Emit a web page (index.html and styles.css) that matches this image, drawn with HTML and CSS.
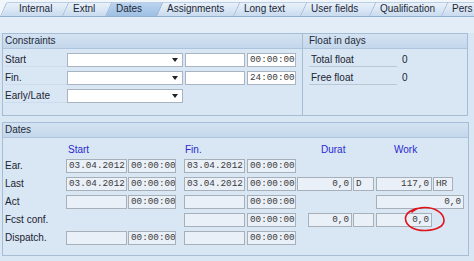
FILE: index.html
```html
<!DOCTYPE html>
<html lang="en">
<head>
  <meta charset="UTF-8">
  <meta name="viewport" content="width=device-width, initial-scale=1.0">
  <title>Activity dates</title>
  <link rel="stylesheet" href="styles.css">
</head>
<body>
  <div class="tabs">
    <div class="tab tab-first">Internal</div>
    <div class="tab" style="width:43px">Extnl</div>
    <div class="tab active" style="width:51px">Dates</div>
    <div class="tab" style="width:77px">Assignments</div>
    <div class="tab" style="width:67px">Long text</div>
    <div class="tab" style="width:69px">User fields</div>
    <div class="tab" style="width:72px">Qualification</div>
    <div class="tab" style="width:40px">Pers</div>
  </div>
  <div class="toolbar"></div>

  <div class="top-row">
    <section class="constraints">
      <div class="group-head">Constraints</div>
      <div class="c-grid">
        <div class="lbl">Start</div>
        <div class="field edit select"><span class="arrow"></span></div>
        <div class="field edit"></div>
        <div class="field edit mono">00:00:00</div>

        <div class="lbl">Fin.</div>
        <div class="field edit select"><span class="arrow"></span></div>
        <div class="field edit"></div>
        <div class="field edit mono">24:00:00</div>

        <div class="lbl">Early/Late</div>
        <div class="field edit select"><span class="arrow"></span></div>
      </div>
    </section>
    <section class="float">
      <div class="group-head float-head">Float in days</div>
      <div class="f-grid">
        <div class="lbl f-lbl">Total float</div>
        <div class="f-val">0</div>
        <div class="lbl f-lbl">Free float</div>
        <div class="f-val">0</div>
      </div>
    </section>
  </div>

  <section class="dates">
    <div class="group-head">Dates</div>
    <div class="d-grid">
      <div></div>
      <div class="col-head h-start">Start</div>
      <div></div>
      <div class="col-head h-fin">Fin.</div>
      <div></div>
      <div class="col-head h-durat">Durat</div>
      <div></div>
      <div class="col-head h-work">Work</div>
      <div></div>

      <div class="lbl">Ear.</div>
      <div class="field ro mono w-date">03.04.2012</div>
      <div class="field ro mono w-t1">00:00:00</div>
      <div class="field ro mono w-date">03.04.2012</div>
      <div class="field ro mono w-t2">00:00:00</div>

      <div class="lbl row-start">Last</div>
      <div class="field ro mono w-date">03.04.2012</div>
      <div class="field ro mono w-t1">00:00:00</div>
      <div class="field ro mono w-date">03.04.2012</div>
      <div class="field ro mono w-t2">00:00:00</div>
      <div class="field ro mono num w-dur">0,0</div>
      <div class="field ro mono w-unit">D</div>
      <div class="field ro mono num w-work">117,0</div>
      <div class="field ro mono w-wunit">HR</div>

      <div class="lbl row-start">Act</div>
      <div class="field ro mono w-date"></div>
      <div class="field ro mono w-t1">00:00:00</div>
      <div class="field ro mono w-date"></div>
      <div class="field ro mono w-t2">00:00:00</div>
      <div class="field ro mono num w-wide">0,0</div>

      <div class="lbl row-start">Fcst conf.</div>
      <div class="field ro mono w-date col-d2"></div>
      <div class="field ro mono w-t2">00:00:00</div>
      <div class="field ro mono num w-fdur">0,0</div>
      <div class="field ro mono w-unit"></div>
      <div class="field ro mono num w-work">0,0</div>

      <div class="lbl row-start">Dispatch.</div>
      <div class="field ro mono w-date"></div>
      <div class="field ro mono w-t1">00:00:00</div>
      <div class="field ro mono w-date"></div>
      <div class="field ro mono w-t2">00:00:00</div>
    </div>

    <svg class="annot" width="44" height="28" viewBox="0 0 44 28">
      <path d="M19 2 C10 2 2 7 2.5 13 C3 20 11 25 23 24.5 C34 24 41.5 20 41 14 C40.5 7 32 1.5 22 1.5 C16 1.5 12 3 9 6"
            fill="none" stroke="#e0141c" stroke-width="1.6" stroke-linecap="round"/>
    </svg>
  </section>
</body>
</html>
```

FILE: styles.css
```css
* {
  box-sizing: border-box;
}
body {
  margin: 0;
  width: 474px;
  height: 261px;
  overflow: hidden;
  background: #d9e6f4;
  font-family: 'Liberation Sans', Arial, sans-serif;
  font-size: 10px;
  color: #1b2430;
}

/* tab strip */
.tabs {
  position: relative;
  z-index: 0;
  display: flex;
  height: 17px;
  padding-top: 2px;
  background: #f1f6fb;
  border-bottom: 1px solid #93b0d1;
  overflow: hidden;
}
.tab {
  position: relative;
  flex: none;
  height: 14px;
  line-height: 14px;
  padding-left: 11px;
  white-space: nowrap;
  color: #1d2836;
}
.tab::before {
  content: "";
  position: absolute;
  z-index: -1;
  left: 0;
  top: 0;
  bottom: 0;
  right: -7px;
  transform: skewX(-24deg);
  transform-origin: 0 100%;
  background: linear-gradient(#e9f1fa, #c9dbef);
  border-left: 1px solid #9ab1cc;
  border-top: 1px solid #bccee3;
  border-top-left-radius: 2px;
}
.tab-first {
  width: 62px;
  padding-left: 19px;
}
.tab.active::before {
  background: linear-gradient(#bad3ee, #9fc0e4);
}

.toolbar {
  height: 16px;
  background: #e3edf8;
}

/* groups */
.group-head {
  height: 15px;
  line-height: 14px;
  padding-left: 2px;
  background: linear-gradient(#d4e3f3, #c4d7eb);
  border-bottom: 1px solid #aec4dc;
  color: #1f2a38;
}
.top-row {
  display: flex;
  width: 466px;
  height: 83px;
  margin-left: 2px;
  border: 1px solid #a6bdd6;
}
.constraints {
  width: 300px;
  border-right: 1px solid #a6bdd6;
}
.float {
  flex: 1;
}
.float-head {
  padding-left: 6px;
}

.lbl {
  height: 14px;
  line-height: 14px;
  white-space: nowrap;
}
.c-grid {
  display: grid;
  grid-template-columns: 62px 118px 62px 49px;
  grid-auto-rows: 18px;
  padding: 4px 0 0 2px;
}
.c-grid .lbl {
  border-bottom: 1px solid #cddcec;
  line-height: 13px;
}
.f-grid {
  display: grid;
  grid-template-columns: 93px auto;
  grid-auto-rows: 18px;
  padding: 4px 0 0 6px;
}
.f-lbl {
  width: 88px;
  padding-left: 2px;
  border-bottom: 1px solid #b9c6d4;
  line-height: 13px;
}
.f-val {
  line-height: 14px;
}

/* input fields */
.field {
  height: 14px;
  line-height: 12px;
  padding: 0 2px;
  border: 1px solid #a4adb8;
  white-space: nowrap;
  overflow: hidden;
}
.edit {
  background: #fff;
  border-color: #a9b4c2;
}
.edit:nth-child(4n+2) {
  width: 116px;
}
.edit:nth-child(4n+3) {
  width: 60px;
}
.select {
  display: flex;
  align-items: center;
  justify-content: flex-end;
  padding-right: 4px;
}
.arrow {
  width: 0;
  height: 0;
  border-left: 3px solid transparent;
  border-right: 3px solid transparent;
  border-top: 4px solid #222;
}
.ro {
  background: #eaf0f7;
  border-color: #a7afb8;
}
.mono {
  font-family: 'Liberation Mono', 'Courier New', monospace;
  font-size: 9.3px;
  color: #3a3a3a;
}
.num {
  text-align: right;
}

/* dates group */
.dates {
  position: relative;
  width: 467px;
  height: 134px;
  margin: 6px 0 0 2px;
  border: 1px solid #a6bdd6;
}
.d-grid {
  display: grid;
  grid-template-columns: 61px 62px 56px 63px 50px 56px 23px 57px 34px;
  grid-template-rows: 19px repeat(5, 18px);
  padding: 2px 0 0 2px;
}
.col-head {
  line-height: 19px;
  color: #2a2ad0;
}
.h-start { padding-left: 2px; }
.h-fin { padding-left: 1px; }
.h-durat { padding-left: 24px; }
.h-work { padding-left: 18px; }
.row-start {
  grid-column: 1;
}
.col-d2 {
  grid-column: 4;
}
.w-date { width: 61px; }
.w-t1 { width: 48px; }
.w-t2 { width: 49px; }
.w-dur { width: 55px; }
.w-fdur {
  width: 44px;
  justify-self: end;
  margin-right: 1px;
}
.w-unit { width: 21px; }
.w-work { width: 56px; }
.w-wunit { width: 20px; }
.w-wide {
  grid-column: 8 / span 2;
  width: 88px;
}
.annot {
  position: absolute;
  left: 400px;
  top: 83px;
}
```
